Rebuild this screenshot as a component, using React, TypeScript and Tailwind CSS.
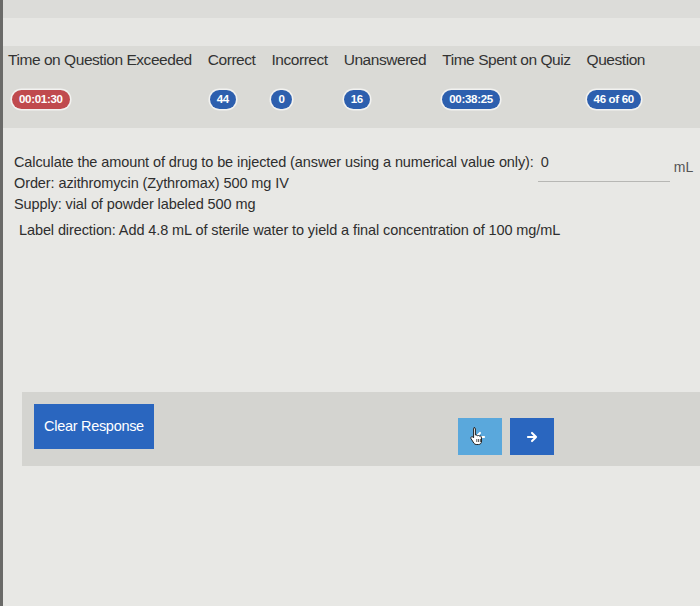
import React from "react";

function Badge({ children, red }: { children: React.ReactNode; red?: boolean }) {
  return (
    <span
      className={
        "inline-flex h-[19px] items-center rounded-full px-[7px] text-[11.5px] font-bold leading-none tracking-[-0.3px] text-white shadow-[0_0_0_1.5px_#f2f2f0] " +
        (red ? "bg-[#c04a4e]" : "bg-[#2d5fae]")
      }
    >
      {children}
    </span>
  );
}

const cols: { label: string; badge: string; red?: boolean; pl?: string }[] = [
  { label: "Time on Question Exceeded", badge: "00:01:30", red: true, pl: "pl-[4px]" },
  { label: "Correct", badge: "44", pl: "pl-[2px]" },
  { label: "Incorrect", badge: "0" },
  { label: "Unanswered", badge: "16" },
  { label: "Time Spent on Quiz", badge: "00:38:25" },
  { label: "Question", badge: "46 of 60" },
];

export default function App() {
  return (
    <div
      className="flex h-[606px] w-[700px] flex-col overflow-hidden border-l-[3px] border-[#6a6a68] bg-[#e8e8e5] text-[#2e2e2e]"
      style={{ fontFamily: '"Liberation Sans", Arial, sans-serif' }}
    >
      <div className="h-[18px] bg-[#dcdcd9]" />
      <div className="h-[28px] bg-[#e6e6e3]" />
      <div className="flex h-[82px] gap-[16px] bg-[#dadad6] px-[5px] pt-[4px]">
        {cols.map((c) => (
          <div key={c.label} className="flex flex-col">
            <div className="text-[15.5px] leading-[20px] tracking-[-0.45px] text-[#333]">{c.label}</div>
            <div className={"mt-[16px] " + (c.pl ?? "")}>
              <Badge red={c.red}>{c.badge}</Badge>
            </div>
          </div>
        ))}
      </div>
      <div className="flex flex-col pl-[11px] pt-[24px]">
        <div className="flex items-start whitespace-nowrap">
          <div className="text-[14.5px] leading-[21px] tracking-[-0.1px] text-[#2e2e2e]">
            <div className="flex items-start">
              <span>Calculate the amount of drug to be injected (answer using a numerical value only):</span>
              <div className="mb-[-9px] ml-[4px] h-[30px] w-[132px] border-b border-[#b7b7b4] pl-[3px] text-[#333]">0</div>
            </div>
            <div>Order: azithromycin (Zythromax) 500 mg IV</div>
            <div>Supply: vial of powder labeled 500 mg</div>
            <div className="mt-[5px] pl-[5px]">Label direction: Add 4.8 mL of sterile water to yield a final concentration of 100 mg/mL</div>
          </div>
          <span className="ml-[4px] mt-[5px] text-[14px] text-[#555]">mL</span>
        </div>
      </div>
      <div className="ml-[19px] mt-[151px] flex h-[74px] items-start bg-[#d4d4d0] pl-[12px] pt-[12px]">
        <button className="h-[45px] w-[120px] bg-[#2a66bf] text-[14.5px] tracking-[-0.3px] text-white">Clear Response</button>
        <div className="ml-[304px] mt-[14px] flex gap-[8px]">
          <button className="relative flex h-[37px] w-[44px] items-center justify-center bg-[#5aa8dc] text-white">
            <svg width="14" height="14" viewBox="0 0 24 24" fill="none" stroke="#fff" strokeWidth="3.5" strokeLinecap="round" strokeLinejoin="round">
              <path d="M19 12H5M12 19l-7-7 7-7" />
            </svg>
            <svg className="absolute left-[11px] top-[8px]" width="16" height="20" viewBox="0 0 16 20">
              <path
                d="M5 1.5c.8 0 1.4.6 1.4 1.4V9l.6-.1c.8-.1 1.4.4 1.5 1 .5-.6 1.6-.5 2 .2.6-.4 1.6-.1 1.8.7l.3 4.2c0 2-1.2 3.5-3 3.5H7.2c-1 0-1.8-.5-2.3-1.3L2 12.6c-.4-.7-.1-1.5.6-1.8.6-.2 1.2 0 1.6.5l.4.6V2.9c0-.8.6-1.4.4-1.4z"
                fill="#fff"
                stroke="#222"
                strokeWidth="1"
              />
              <path d="M7.8 13v3M9.6 13v3M11.4 13v3" stroke="#222" strokeWidth="0.8" />
            </svg>
          </button>
          <button className="flex h-[37px] w-[44px] items-center justify-center bg-[#2a66bf] text-white">
            <svg width="14" height="14" viewBox="0 0 24 24" fill="none" stroke="#fff" strokeWidth="3.5" strokeLinecap="round" strokeLinejoin="round">
              <path d="M5 12h14M12 5l7 7-7 7" />
            </svg>
          </button>
        </div>
      </div>
    </div>
  );
}
